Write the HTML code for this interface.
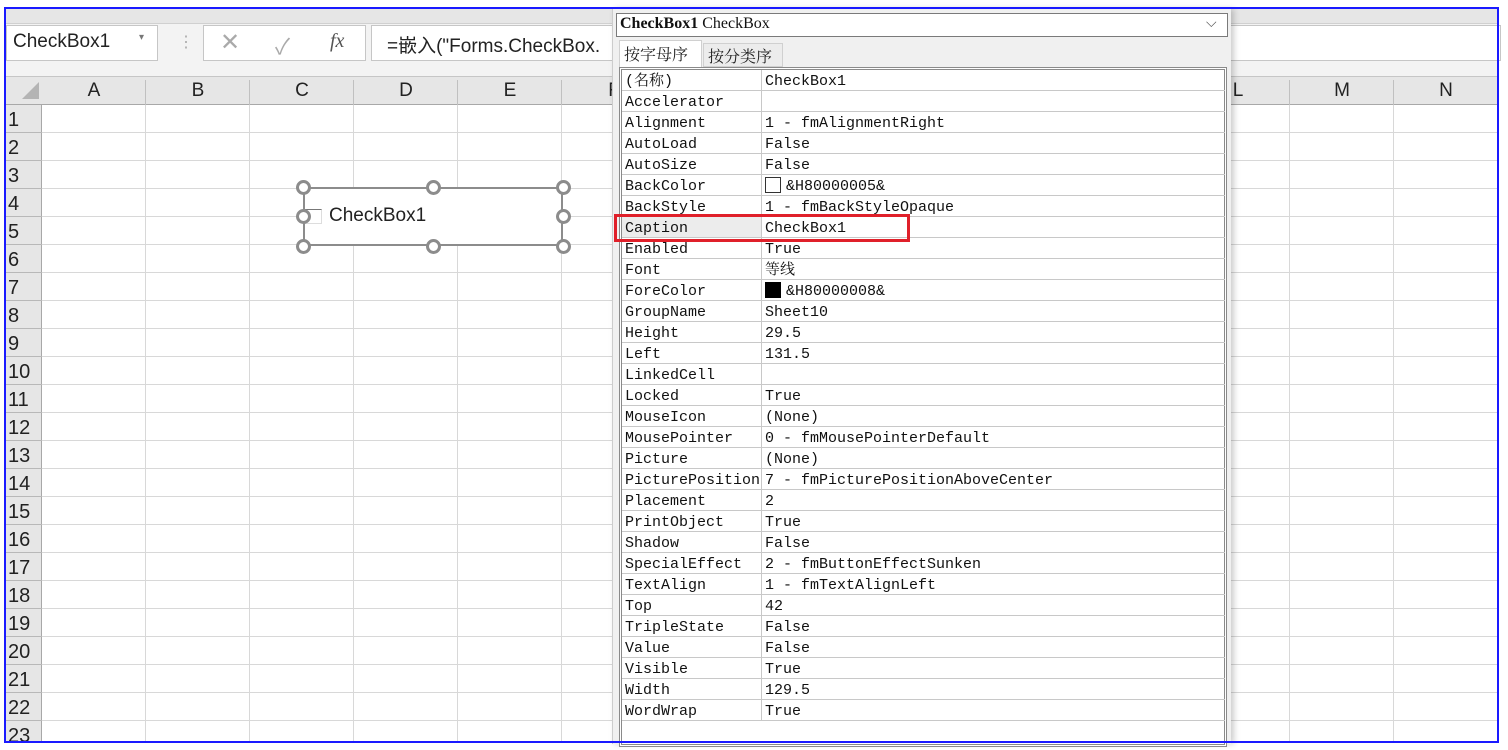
<!DOCTYPE html>
<html><head><meta charset="utf-8"><style>
*{margin:0;padding:0;box-sizing:border-box}
body{width:1508px;height:744px;background:#fff;position:relative;overflow:hidden;font-family:"Liberation Sans","Noto Sans CJK SC",sans-serif}
.a{position:absolute}
.frame{left:4px;top:7px;width:1495px;height:736px;border:2px solid #1a1aff;border-bottom-width:2px}
.mono{font-family:"Liberation Mono","Noto Serif CJK SC",monospace;font-size:15px;color:#111}
.row{position:absolute;left:0;height:21px;width:603px;border-bottom:1px solid #c8c8c8}
.row span{position:absolute;top:2px;line-height:19px}
.row .n{left:3px}.row .v{left:143px}
.h{position:absolute;width:15px;height:15px;border:3px solid #8c8c8c;border-radius:50%;background:#fff}
</style></head><body>
<div class="a" style="left:4px;top:7px;width:1495px;height:17px;background:#e6e6e6;border-bottom:1px solid #d0d0d0"></div>
<div class="a" style="left:4px;top:24px;width:1495px;height:53px;background:#f3f3f3;border-bottom:1px solid #c6c6c6"></div>
<div class="a" style="left:6px;top:25px;width:152px;height:36px;background:#fff;border:1px solid #c6c6c6"></div>
<div class="a" style="left:13px;top:31px;font-size:19px;color:#222">CheckBox1</div>
<div class="a" style="left:139px;top:32px;font-size:10px;color:#777">▾</div>
<div class="a" style="left:178px;top:32px;font-size:16px;color:#aaa">⋮</div>
<div class="a" style="left:203px;top:25px;width:163px;height:36px;background:#fff;border:1px solid #c6c6c6"></div>
<div class="a" style="left:220px;top:28px;font-size:24px;color:#aaa">✕</div>
<div class="a" style="left:275px;top:29px;font-size:22px;color:#aaa">✓</div>
<div class="a" style="left:330px;top:30px;font-size:20px;font-style:italic;font-family:'Liberation Serif',serif;color:#555">fx</div>
<div class="a" style="left:371px;top:25px;width:1130px;height:36px;background:#fff;border:1px solid #c6c6c6"></div>
<div class="a" style="left:387px;top:31px;font-size:19px;color:#222;font-family:'Liberation Sans','Noto Sans CJK SC',sans-serif">=嵌入("Forms.CheckBox.</div>
<!-- header -->
<div class="a" style="left:6px;top:77px;width:1492px;height:28px;background:#e6e6e6;border-bottom:1px solid #a8a8a8"></div>
<div class="a" style="left:22px;top:82px;width:0;height:0;border-left:17px solid transparent;border-bottom:17px solid #b4b4b4"></div>
<div class="a" style="left:6px;top:105px;width:36px;height:637px;background:#e6e6e6;border-right:1px solid #a8a8a8"></div>
<div class="a" style="left:42px;top:105px;width:1456px;height:637px;background-image:repeating-linear-gradient(to right,transparent 0 103px,#d8d8d8 103px 104px),repeating-linear-gradient(to bottom,transparent 0 27px,#d8d8d8 27px 28px)"></div>
<div class="a" style="left:42px;top:80px;width:1456px;height:25px;background-image:repeating-linear-gradient(to right,transparent 0 103px,#c0c0c0 103px 104px)"></div>
<div class="a" style="left:6px;top:105px;width:36px;height:637px;background-image:repeating-linear-gradient(to bottom,transparent 0 27px,#b8b8b8 27px 28px)"></div>
<div class="a" style="left:42px;top:80px;font-size:19px;color:#222;display:flex">
<span style="width:104px;text-align:center">A</span><span style="width:104px;text-align:center">B</span><span style="width:104px;text-align:center">C</span><span style="width:104px;text-align:center">D</span><span style="width:104px;text-align:center">E</span><span style="width:104px;text-align:center">F</span></div>
<div class="a" style="left:1186px;top:80px;font-size:19px;color:#222;display:flex"><span style="width:104px;text-align:center">L</span><span style="width:104px;text-align:center">M</span><span style="width:104px;text-align:center">N</span></div>
<div class="a" style="left:8px;top:106px;font-size:20px;color:#222;line-height:28px">1<br>2<br>3<br>4<br>5<br>6<br>7<br>8<br>9<br>10<br>11<br>12<br>13<br>14<br>15<br>16<br>17<br>18<br>19<br>20<br>21<br>22<br>23</div>
<!-- checkbox object -->
<div class="a" style="left:303px;top:187px;width:260px;height:59px;border:2px solid #8c8c8c;background:#fff"></div>
<div class="a" style="left:305px;top:209px;width:17px;height:15px;border-top:1px solid #777;border-left:1px solid #777;border-right:1px solid #ddd;border-bottom:1px solid #ddd"></div>
<div class="a" style="left:329px;top:205px;font-size:19px;color:#222">CheckBox1</div>
<div class="h" style="left:296px;top:180px"></div><div class="h" style="left:426px;top:180px"></div><div class="h" style="left:556px;top:180px"></div>
<div class="h" style="left:296px;top:209px"></div><div class="h" style="left:556px;top:209px"></div>
<div class="h" style="left:296px;top:239px"></div><div class="h" style="left:426px;top:239px"></div><div class="h" style="left:556px;top:239px"></div>
<!-- properties window -->
<div class="a" style="left:612px;top:9px;width:619px;height:735px;background:#f0f0f0;box-shadow:3px 0 6px rgba(0,0,0,.2);border-left:1px solid #ccc"></div>
<div class="a" style="left:616px;top:13px;width:612px;height:24px;background:#fff;border:1px solid #7a7a7a"></div>
<div class="a" style="left:620px;top:15px;font-family:'Liberation Serif',serif;font-size:16px;color:#111"><b>CheckBox1</b> CheckBox</div>
<div class="a" style="left:1206px;top:14px;font-size:14px;color:#555">⌵</div>
<div class="a" style="left:619px;top:40px;width:83px;height:28px;background:#fff;border:1px solid #d0d0d0;border-bottom:none"></div>
<div class="a" style="left:624px;top:42px;font-family:'Noto Serif CJK SC',serif;font-size:16px;color:#222">按字母序</div>
<div class="a" style="left:703px;top:43px;width:80px;height:24px;background:#ececec;border:1px solid #d0d0d0"></div>
<div class="a" style="left:708px;top:44px;font-family:'Noto Serif CJK SC',serif;font-size:16px;color:#222">按分类序</div>
<div class="a" style="left:619px;top:67px;width:608px;height:680px;background:#fff;border:3px double #8a8a8a"></div>
<div class="a mono" style="left:622px;top:70px;width:603px;height:672px">
<div class="a" style="left:139px;top:0;width:1px;height:651px;background:#c8c8c8"></div>
<div class="row" style="top:0"><span class="n">(名称)</span><span class="v">CheckBox1</span></div>
<div class="row" style="top:21px"><span class="n">Accelerator</span></div>
<div class="row" style="top:42px"><span class="n">Alignment</span><span class="v">1 - fmAlignmentRight</span></div>
<div class="row" style="top:63px"><span class="n">AutoLoad</span><span class="v">False</span></div>
<div class="row" style="top:84px"><span class="n">AutoSize</span><span class="v">False</span></div>
<div class="row" style="top:105px"><span class="n">BackColor</span><span class="v"><i style="display:inline-block;width:16px;height:16px;border:1px solid #333;vertical-align:-3px;margin-right:5px"></i>&amp;H80000005&amp;</span></div>
<div class="row" style="top:126px"><span class="n">BackStyle</span><span class="v">1 - fmBackStyleOpaque</span></div>
<div class="row" style="top:147px"><div class="a" style="left:0;top:0;width:139px;height:20px;background:#ececec"></div><span class="n">Caption</span><span class="v">CheckBox1</span></div>
<div class="row" style="top:168px"><span class="n">Enabled</span><span class="v">True</span></div>
<div class="row" style="top:189px"><span class="n">Font</span><span class="v">等线</span></div>
<div class="row" style="top:210px"><span class="n">ForeColor</span><span class="v"><i style="display:inline-block;width:16px;height:16px;background:#000;vertical-align:-3px;margin-right:5px"></i>&amp;H80000008&amp;</span></div>
<div class="row" style="top:231px"><span class="n">GroupName</span><span class="v">Sheet10</span></div>
<div class="row" style="top:252px"><span class="n">Height</span><span class="v">29.5</span></div>
<div class="row" style="top:273px"><span class="n">Left</span><span class="v">131.5</span></div>
<div class="row" style="top:294px"><span class="n">LinkedCell</span></div>
<div class="row" style="top:315px"><span class="n">Locked</span><span class="v">True</span></div>
<div class="row" style="top:336px"><span class="n">MouseIcon</span><span class="v">(None)</span></div>
<div class="row" style="top:357px"><span class="n">MousePointer</span><span class="v">0 - fmMousePointerDefault</span></div>
<div class="row" style="top:378px"><span class="n">Picture</span><span class="v">(None)</span></div>
<div class="row" style="top:399px"><span class="n">PicturePosition</span><span class="v">7 - fmPicturePositionAboveCenter</span></div>
<div class="row" style="top:420px"><span class="n">Placement</span><span class="v">2</span></div>
<div class="row" style="top:441px"><span class="n">PrintObject</span><span class="v">True</span></div>
<div class="row" style="top:462px"><span class="n">Shadow</span><span class="v">False</span></div>
<div class="row" style="top:483px"><span class="n">SpecialEffect</span><span class="v">2 - fmButtonEffectSunken</span></div>
<div class="row" style="top:504px"><span class="n">TextAlign</span><span class="v">1 - fmTextAlignLeft</span></div>
<div class="row" style="top:525px"><span class="n">Top</span><span class="v">42</span></div>
<div class="row" style="top:546px"><span class="n">TripleState</span><span class="v">False</span></div>
<div class="row" style="top:567px"><span class="n">Value</span><span class="v">False</span></div>
<div class="row" style="top:588px"><span class="n">Visible</span><span class="v">True</span></div>
<div class="row" style="top:609px"><span class="n">Width</span><span class="v">129.5</span></div>
<div class="row" style="top:630px"><span class="n">WordWrap</span><span class="v">True</span></div>
</div>
<div class="a" style="left:614px;top:214px;width:296px;height:28px;border:3px solid #e0202a"></div>
<div class="a frame"></div>
</body></html>
